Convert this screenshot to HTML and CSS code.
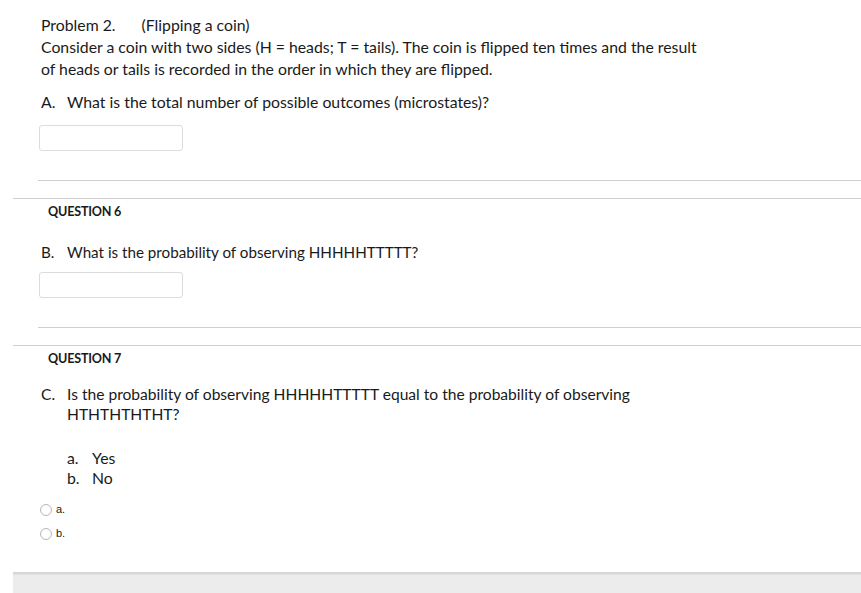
FILE: index.html
```html
<!DOCTYPE html>
<html>
<head>
<meta charset="utf-8">
<link rel="stylesheet" href="styles.css">
</head>
<body>
<div class="page">
  <section class="qbody first">
    <div class="doc">
      <p class="para"><span>Problem 2.</span><span class="tab">(Flipping a coin)</span><br>Consider a coin with two sides (H = heads; T = tails). The coin is flipped ten times and the result<br>of heads or tails is recorded in the order in which they are flipped.</p>
      <div class="item item-a"><span class="lbl">A.</span><span>What is the total number of possible outcomes (microstates)?</span></div>
    </div>
    <input class="answer answer-a" type="text" aria-label="Answer A">
  </section>

  <section class="question">
    <h3 class="qhead">QUESTION 6</h3>
    <div class="qbody">
      <div class="doc">
        <div class="item item-b"><span class="lbl">B.</span><span>What is the probability of observing HHHHHTTTTT?</span></div>
      </div>
      <input class="answer answer-b" type="text" aria-label="Answer B">
    </div>
  </section>

  <section class="question">
    <h3 class="qhead">QUESTION 7</h3>
    <div class="qbody last">
      <div class="doc">
        <div class="item item-c"><span class="lbl">C.</span><span>Is the probability of observing HHHHHTTTTT equal to the probability of observing<br>HTHTHTHTHT?</span></div>
        <ol class="choices">
          <li><span class="lbl2">a.</span>Yes</li>
          <li><span class="lbl2">b.</span>No</li>
        </ol>
      </div>
      <div class="radios">
        <label class="radio"><span class="circle"></span><span>a.</span></label>
        <label class="radio"><span class="circle"></span><span>b.</span></label>
      </div>
    </div>
  </section>

  <div class="footer-bar"></div>
</div>
</body>
</html>
```

FILE: styles.css
```css
html, body {
  margin: 0;
  padding: 0;
  background: #ffffff;
}

body {
  font-family: "Lato", "Open Sans", sans-serif;
  color: #1a1a1a;
  overflow: hidden;
}

.page {
  padding-left: 13px;
  padding-top: 14px;
}

.qbody {
  margin-left: 25px;
  padding-left: 1px;
  border-bottom: 1px solid #cfcfcf;
}

.qbody.first {
  padding-bottom: 29px;
}

.qbody.last {
  border-bottom: none;
  padding-bottom: 31px;
}

.doc {
  padding-left: 2px;
  font-size: 15.8px;
  line-height: 22px;
}

.para {
  margin: 0;
}

.tab {
  margin-left: 26px;
}

.item {
  display: flex;
}

.item-a {
  margin-top: 11px;
}

.item-b {
  margin-top: 0;
  font-size: 15.2px;
}

.item-c {
  line-height: 20px;
  font-size: 15.6px;
}

.lbl {
  width: 26px;
  flex: none;
}

.answer {
  display: block;
  box-sizing: border-box;
  width: 144px;
  height: 26px;
  margin: 0;
  border: 1px solid #dcdcdc;
  border-radius: 3px;
  background: #fff;
  padding: 0 4px;
}

.answer-a {
  margin-top: 12px;
}

.answer-b {
  margin-top: 9px;
  margin-bottom: 29px;
}

.question {
  border-top: 1px solid #cfcfcf;
  margin-top: 17px;
}

.qhead {
  margin: 0;
  padding: 6px 0 0 35px;
  font-size: 12.6px;
  line-height: 14px;
  font-weight: 700;
  letter-spacing: -0.2px;
  color: #1a1a1a;
}

.question .item-b {
  padding-top: 22px;
}

.question .item-c {
  padding-top: 18px;
}

.choices {
  list-style: none;
  margin: 24px 0 0 0;
  padding: 0 0 0 26px;
  line-height: 20px;
}

.lbl2 {
  display: inline-block;
  width: 25px;
}

.radios {
  margin-top: 14px;
  display: flex;
  flex-direction: column;
  gap: 9px;
}

.radio {
  display: flex;
  align-items: center;
  gap: 4px;
  font-family: "Liberation Sans", Arial, sans-serif;
  font-size: 11px;
  line-height: 15px;
  color: #222;
  margin-left: 1px;
}

.circle {
  width: 12px;
  height: 12px;
  border: 1px solid #b8b8b8;
  border-radius: 50%;
  background: #fff;
  box-sizing: border-box;
  flex: none;
}

.footer-bar {
  height: 30px;
  background: #ececec;
  border-top: 2px solid #d6d6d6;
  box-shadow: inset 0 1px 0 #e2e2e2;
}
```
